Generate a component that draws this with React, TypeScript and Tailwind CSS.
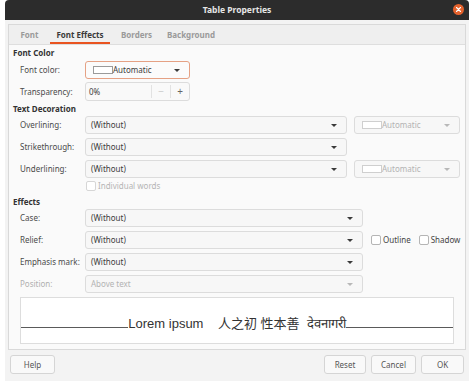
import React from "react";

const ui = { fontFamily: '"Noto Sans", "DejaVu Sans", sans-serif' };

function Arrow({ faded = false }: { faded?: boolean }) {
  return (
    <svg width="6" height="3" viewBox="0 0 6 3" className="shrink-0">
      <path d="M0 0h6L3 3z" fill={faded ? "#b8b8b8" : "#3a3a3a"} />
    </svg>
  );
}

function Swatch({ faded = false }: { faded?: boolean }) {
  return (
    <span
      className={`inline-block h-[8px] w-[20px] border bg-white ${faded ? "border-[#cfcfcf]" : "border-[#9a9a9a]"}`}
    />
  );
}

type ComboProps = {
  width: string;
  text: string;
  disabled?: boolean;
  focused?: boolean;
  swatch?: boolean;
};

function Combo({ width, text, disabled, focused, swatch }: ComboProps) {
  return (
    <div
      className={`flex h-[18px] shrink-0 items-center rounded-[3px] border pr-[9px] ${width} ${
        focused ? "border-[#e5a184] bg-[#fbfbfb]" : "border-[#dcdcdc] bg-[#f7f7f7]"
      } ${swatch ? "pl-[7px]" : "pl-[5px]"}`}
    >
      {swatch && <Swatch faded={disabled} />}
      <span className={`flex-1 leading-none ${disabled ? "text-[#b3b3b3]" : "text-[#3c3c3c]"}`}>{text}</span>
      <Arrow faded={disabled} />
    </div>
  );
}

function Row({ label, disabled, children }: { label: string; disabled?: boolean; children: React.ReactNode }) {
  return (
    <div className="flex h-[18px] items-center">
      <span className={`w-[65px] shrink-0 ${disabled ? "text-[#b0b0b0]" : "text-[#4a4a4a]"}`}>{label}</span>
      {children}
    </div>
  );
}

function Heading({ children }: { children: React.ReactNode }) {
  return <div className="-ml-[7px] flex h-[15px] items-center font-bold text-[#333]">{children}</div>;
}

function Check({ label, faded }: { label: string; faded?: boolean }) {
  return (
    <div className="flex items-center gap-[2px]">
      <span className={`inline-block h-[10px] w-[10px] rounded-[2px] border bg-white ${faded ? "border-[#d6d6d6]" : "border-[#b5b5b5]"}`} />
      <span className={faded ? "text-[#b5b5b5]" : "text-[#444]"}>{label}</span>
    </div>
  );
}

function Btn({ w, children }: { w: string; children: React.ReactNode }) {
  return (
    <div className={`flex h-[19px] items-center justify-center rounded-[3px] border border-[#d5d5d5] bg-[#f9f9f9] text-[#555] ${w}`}>
      {children}
    </div>
  );
}

const tabs = [
  { name: "Font", w: "w-[41px]" },
  { name: "Font Effects", w: "w-[60px]", active: true },
  { name: "Borders", w: "w-[53px]" },
  { name: "Background", w: "w-[56px]" },
];

export default function App() {
  return (
    <div className="h-[384px] w-[474px] bg-white text-[8px]" style={ui}>
      <div className="ml-[5px] flex h-[381px] w-[464px] flex-col overflow-hidden rounded-t-[4px] bg-[#f3f3f3]">
        {/* title bar */}
        <div className="relative flex h-[20px] shrink-0 items-center justify-center bg-[#2c2c2c]">
          <span className="text-[8.5px] font-bold text-[#e6e6e6]">Table Properties</span>
          <div className="absolute right-[5px] top-[4px] flex h-[11px] w-[11px] items-center justify-center rounded-full bg-[#e4622d]">
            <svg width="5" height="5" viewBox="0 0 5 5">
              <path d="M0.5 0.5l4 4M4.5 0.5l-4 4" stroke="#fff" strokeWidth="1.1" strokeLinecap="round" />
            </svg>
          </div>
        </div>

        {/* notebook */}
        <div className="mx-[3px] mt-[4px] flex h-[326px] flex-col border border-[#d9d9d9] bg-[#fafafa]">
          <div className="flex h-[20px] shrink-0 border-b border-[#dedede] bg-[#efefef]">
            {tabs.map((t) => (
              <div
                key={t.name}
                className={`flex items-center justify-center border-b-2 pt-[2px] font-bold ${t.w} ${
                  t.active ? "border-[#e95420] text-[#3a3a3a]" : "border-transparent text-[#9a9a9a]"
                }`}
              >
                {t.name}
              </div>
            ))}
          </div>

          <div className="flex flex-col px-[11px]">
            <Heading>Font Color</Heading>
            <div className="mt-[1px]">
              <Row label="Font color:">
                <Combo width="w-[105px]" text="Automatic" focused swatch />
              </Row>
            </div>
            <div className="mt-[3px] flex h-[19px] items-center">
              <span className="w-[65px] shrink-0 text-[#4a4a4a]">Transparency:</span>
              <div className="flex h-[19px] w-[105px] items-stretch rounded-[3px] border border-[#dcdcdc] bg-[#f9f9f9]">
                <span className="flex flex-1 items-center pl-[3px] text-[#3c3c3c]">0%</span>
                <span className="my-[2px] w-px bg-[#e2e2e2]" />
                <span className="flex w-[18px] items-center justify-center text-[10px] text-[#c8c8c8]">−</span>
                <span className="my-[2px] w-px bg-[#e2e2e2]" />
                <span className="flex w-[18px] items-center justify-center text-[10px] text-[#666]">+</span>
              </div>
            </div>

            <Heading>Text Decoration</Heading>
            <div className="flex flex-col gap-[4px]">
              <Row label="Overlining:">
                <Combo width="w-[262px]" text="(Without)" />
                <div className="ml-[7px]">
                  <Combo width="w-[106px]" text="Automatic" disabled swatch />
                </div>
              </Row>
              <Row label="Strikethrough:">
                <Combo width="w-[262px]" text="(Without)" />
              </Row>
              <Row label="Underlining:">
                <Combo width="w-[262px]" text="(Without)" />
                <div className="ml-[7px]">
                  <Combo width="w-[106px]" text="Automatic" disabled swatch />
                </div>
              </Row>
            </div>
            <div className="flex h-[16px] items-center pl-[66px]">
              <Check label="Individual words" faded />
            </div>

            <Heading>Effects</Heading>
            <div className="flex flex-col gap-[4px]">
              <Row label="Case:">
                <Combo width="w-[278px]" text="(Without)" />
              </Row>
              <Row label="Relief:">
                <Combo width="w-[278px]" text="(Without)" />
                <div className="ml-[8px] flex items-center gap-[8px]">
                  <Check label="Outline" />
                  <Check label="Shadow" />
                </div>
              </Row>
              <Row label="Emphasis mark:">
                <Combo width="w-[278px]" text="(Without)" />
              </Row>
              <Row label="Position:" disabled>
                <Combo width="w-[278px]" text="Above text" disabled />
              </Row>
            </div>

            <div className="mt-[4px] h-[47px] w-[434px] border border-[#dddddd] bg-white pt-[19px]">
              <div className="flex items-baseline">
                <div className="h-px flex-1 bg-[#5a5a5a]" />
                <span
                  className="whitespace-pre text-[13px] leading-[13px] text-[#333]"
                  style={{ fontFamily: '"Liberation Sans", "Noto Sans CJK SC", sans-serif' }}
                >
                  {"Lorem ipsum    人之初 性本善  देवनागरी"}
                </span>
                <div className="h-px flex-1 bg-[#5a5a5a]" />
              </div>
            </div>
          </div>
        </div>

        {/* buttons */}
        <div className="flex flex-1 items-start px-[5px] pt-[5px]">
          <Btn w="w-[45px]">Help</Btn>
          <div className="flex-1" />
          <div className="flex gap-[5px]">
            <Btn w="w-[42px]">Reset</Btn>
            <Btn w="w-[45px]">Cancel</Btn>
            <Btn w="w-[43px]">OK</Btn>
          </div>
        </div>
      </div>
    </div>
  );
}
